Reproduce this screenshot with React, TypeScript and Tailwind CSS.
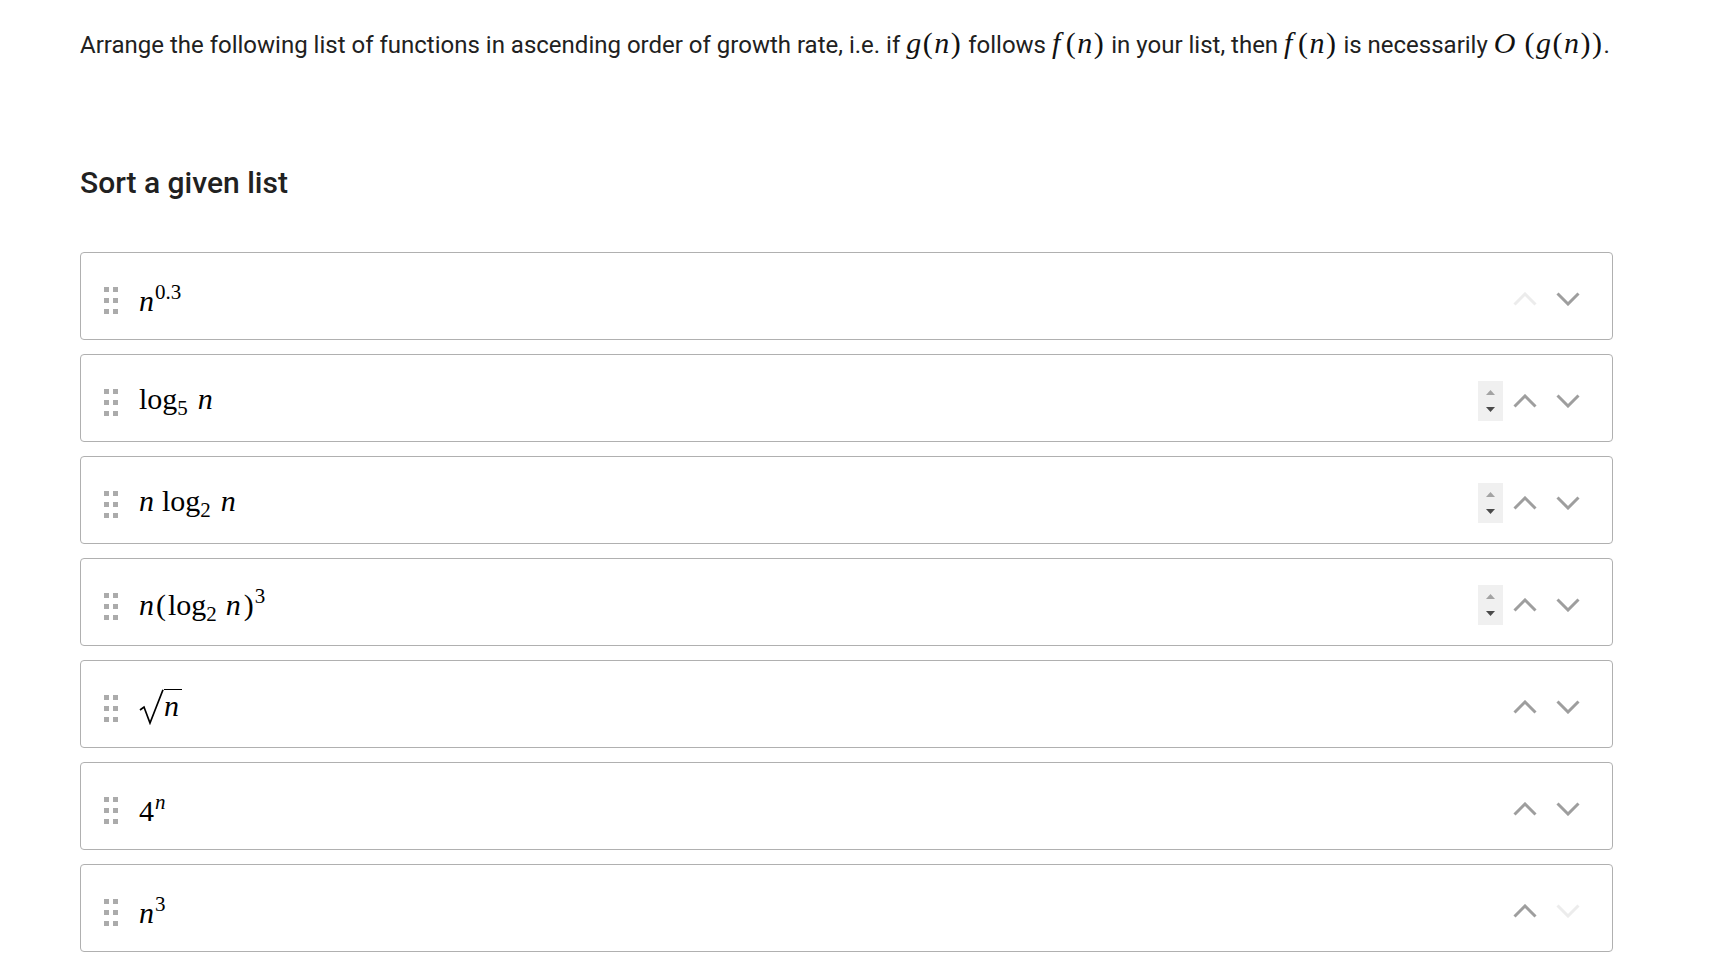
import React from 'react';

type Row = {
  id: string;
  math: React.ReactNode;
  stepper?: boolean;
  upDisabled?: boolean;
  downDisabled?: boolean;
};

const M = ({ children }: { children: React.ReactNode }) => (
  <span className="italic">{children}</span>
);

const Sup = ({ children }: { children: React.ReactNode }) => (
  <span className="text-[21px] align-[12px] leading-none ml-[1px]">{children}</span>
);

const Sub = ({ children }: { children: React.ReactNode }) => (
  <span className="text-[21px] align-[-6px] leading-none">{children}</span>
);

const Sqrt = ({ children }: { children: React.ReactNode }) => (
  <span className="inline-flex items-start align-[-9px]">
    <svg width="25" height="36" viewBox="0 0 25 36" className="shrink-0">
      <path d="M1 21 L5 18 L11 34 L24 0.75" fill="none" stroke="#000" strokeWidth="1.7" strokeLinejoin="miter" />
    </svg>
    <span className="border-t-[1.5px] border-black leading-[32px] pr-[3px]">{children}</span>
  </span>
);

const rows: Row[] = [
  { id: 'a', math: <><M>n</M><Sup>0.3</Sup></>, upDisabled: true },
  { id: 'b', math: <>log<Sub>5</Sub><span className="ml-[10px]"><M>n</M></span></>, stepper: true },
  { id: 'c', math: <><M>n</M><span className="ml-[8px]">log</span><Sub>2</Sub><span className="ml-[10px]"><M>n</M></span></>, stepper: true },
  { id: 'd', math: <><M>n</M><span className="mx-[2px]">(</span>log<Sub>2</Sub><span className="ml-[9px]"><M>n</M></span><span className="ml-[3px]">)</span><Sup>3</Sup></>, stepper: true },
  { id: 'e', math: <Sqrt><M>n</M></Sqrt> },
  { id: 'f', math: <>4<Sup><M>n</M></Sup></> },
  { id: 'g', math: <><M>n</M><Sup>3</Sup></>, downDisabled: true },
];

const Grip = () => (
  <div className="grid grid-cols-2 gap-x-[4px] gap-y-[6px] w-[14px] shrink-0 mt-[8px]">
    {Array.from({ length: 6 }).map((_, i) => (
      <span key={i} className="w-[5px] h-[5px] bg-[#ababab]" />
    ))}
  </div>
);

const Chevron = ({ dir, disabled }: { dir: 'up' | 'down'; disabled?: boolean }) => (
  <svg width="24" height="14" viewBox="0 0 24 14" className="shrink-0">
    <polyline
      points={dir === 'up' ? '1.5,12.5 12,2 22.5,12.5' : '1.5,1.5 12,12 22.5,1.5'}
      fill="none"
      stroke={disabled ? '#ececec' : '#9e9e9e'}
      strokeWidth="3"
    />
  </svg>
);

const Stepper = () => (
  <div className="w-[25px] h-[40px] bg-[#f0f0f0] flex flex-col items-center justify-center gap-[12px] mr-[10px]">
    <svg width="9" height="5" viewBox="0 0 9 5"><polygon points="0,5 4.5,0 9,5" fill="#a3a3a3" /></svg>
    <svg width="9" height="5" viewBox="0 0 9 5"><polygon points="0,0 4.5,5 9,0" fill="#4a4a4a" /></svg>
  </div>
);

const im = "font-['Liberation_Serif',serif] text-[30px] leading-[20px] tracking-[1.5px] text-[#111]";

export default function App() {
  return (
    <div className="min-h-screen bg-white pl-[80px] pr-[102px] pt-[29px] pb-[16px] text-[#212121] font-['Roboto',sans-serif]">
      <p className="text-[24px] leading-[32px] whitespace-nowrap">
        Arrange the following list of functions in ascending order of growth rate, i.e. if{' '}
        <span className={im}><M>g</M>(<M>n</M>)</span> follows{' '}
        <span className={im}><M>f</M>&#8202;(<M>n</M>)</span> in your list, then{' '}
        <span className={im}><M>f</M>&#8202;(<M>n</M>)</span> is necessarily{' '}
        <span className={im}><M>O</M>&#8201;(<M>g</M>(<M>n</M>))</span>.
      </p>

      <h2 className="mt-[104px] text-[30px] leading-[36px] font-medium">Sort a given list</h2>

      <ul className="mt-[51px] flex flex-col gap-[14px]">
        {rows.map((r) => (
          <li
            key={r.id}
            className="h-[88px] border border-[#b0b0b0] rounded-[4px] flex items-center pl-[23px] pr-[32px]"
          >
            <Grip />
            <div className="ml-[21px] flex-1 font-['Liberation_Serif',serif] text-[30px] leading-[32px] text-black pt-[6px]">
              {r.math}
            </div>
            <div className="flex items-center pt-[6px]">
              {r.stepper && <Stepper />}
              <Chevron dir="up" disabled={r.upDisabled} />
              <span className="w-[19px]" />
              <Chevron dir="down" disabled={r.downDisabled} />
            </div>
          </li>
        ))}
      </ul>
    </div>
  );
}
